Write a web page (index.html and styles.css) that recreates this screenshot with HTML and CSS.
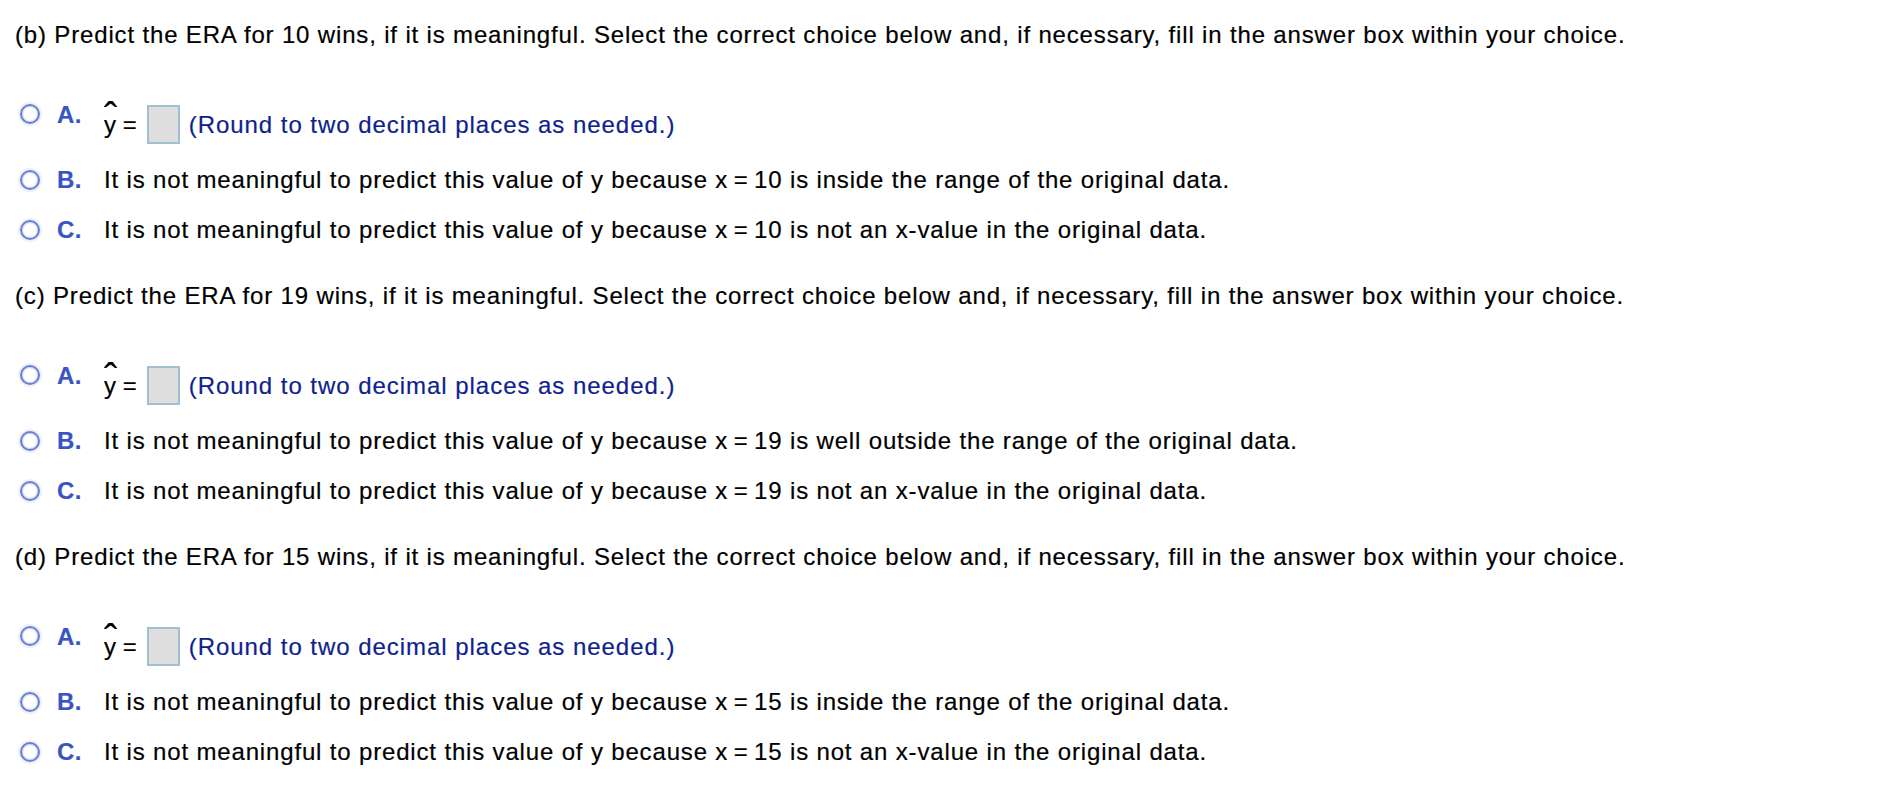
FILE: index.html
```html
<!DOCTYPE html>
<html lang="en">
<head>
<meta charset="utf-8">
<title>Predict the ERA</title>
<link rel="stylesheet" href="styles.css">
</head>
<body>
<div class="page">
  <section class="part">
    <p class="prompt">(b) Predict the ERA for 10 wins, if it is meaningful. Select the correct choice below and, if necessary, fill in the answer box within your choice.</p>
    <div class="choice choice-a">
      <span class="radio"></span>
      <span class="label">A.</span>
      <span class="math"><span class="yhat">y<span class="hat">ˆ</span></span><span class="eq">=</span><span class="answer-box"></span><span class="hint">(Round to two decimal places as needed.)</span></span>
    </div>
    <div class="choice">
      <span class="radio"></span>
      <span class="label">B.</span>
      <span class="text">It is not meaningful to predict this value of y because <span class="xeq">x = 10</span> is inside the range of the original data.</span>
    </div>
    <div class="choice">
      <span class="radio"></span>
      <span class="label">C.</span>
      <span class="text">It is not meaningful to predict this value of y because <span class="xeq">x = 10</span> is not an x-value in the original data.</span>
    </div>
  </section>
  <section class="part">
    <p class="prompt">(c) Predict the ERA for 19 wins, if it is meaningful. Select the correct choice below and, if necessary, fill in the answer box within your choice.</p>
    <div class="choice choice-a">
      <span class="radio"></span>
      <span class="label">A.</span>
      <span class="math"><span class="yhat">y<span class="hat">ˆ</span></span><span class="eq">=</span><span class="answer-box"></span><span class="hint">(Round to two decimal places as needed.)</span></span>
    </div>
    <div class="choice">
      <span class="radio"></span>
      <span class="label">B.</span>
      <span class="text">It is not meaningful to predict this value of y because <span class="xeq">x = 19</span> is well outside the range of the original data.</span>
    </div>
    <div class="choice">
      <span class="radio"></span>
      <span class="label">C.</span>
      <span class="text">It is not meaningful to predict this value of y because <span class="xeq">x = 19</span> is not an x-value in the original data.</span>
    </div>
  </section>
  <section class="part">
    <p class="prompt">(d) Predict the ERA for 15 wins, if it is meaningful. Select the correct choice below and, if necessary, fill in the answer box within your choice.</p>
    <div class="choice choice-a">
      <span class="radio"></span>
      <span class="label">A.</span>
      <span class="math"><span class="yhat">y<span class="hat">ˆ</span></span><span class="eq">=</span><span class="answer-box"></span><span class="hint">(Round to two decimal places as needed.)</span></span>
    </div>
    <div class="choice">
      <span class="radio"></span>
      <span class="label">B.</span>
      <span class="text">It is not meaningful to predict this value of y because <span class="xeq">x = 15</span> is inside the range of the original data.</span>
    </div>
    <div class="choice">
      <span class="radio"></span>
      <span class="label">C.</span>
      <span class="text">It is not meaningful to predict this value of y because <span class="xeq">x = 15</span> is not an x-value in the original data.</span>
    </div>
  </section>
</div>
</body>
</html>
```

FILE: styles.css
```css
html, body {
  margin: 0;
  padding: 0;
  background: #ffffff;
}

body {
  font-family: "Liberation Sans", Arial, Helvetica, sans-serif;
  font-size: 24px;
  letter-spacing: 0.84px;
  color: #000000;
  -webkit-text-stroke: 0.2px currentColor;
}

.page {
  padding: 22px 0 0 15px;
  display: flex;
  flex-direction: column;
  gap: 40px;
}

.prompt {
  margin: 0;
  line-height: 26px;
  white-space: nowrap;
}

.choice {
  display: flex;
  align-items: center;
  line-height: 26px;
  margin-top: 23px;
  white-space: nowrap;
}

.choice + .choice + .choice {
  margin-top: 24px;
}

.choice-a {
  align-items: flex-start;
  margin-top: 56px;
}

.radio {
  flex: none;
  box-sizing: border-box;
  width: 20px;
  height: 20px;
  margin-left: 5px;
  margin-right: 17px;
  border-radius: 50%;
  border: 2px solid #6a80d4;
  box-shadow: 0 0 0 2px #f0f1f6, inset 0 0 1px 1px rgba(120, 140, 220, 0.4);
  background: #ffffff;
}

.label {
  flex: none;
  width: 47px;
  font-weight: bold;
  letter-spacing: 0.3px;
  color: #3954c3;
}

.choice-a .label {
  line-height: 22px;
}

.math {
  display: flex;
  align-items: center;
  margin-top: 1px;
}

.yhat {
  position: relative;
}

.hat {
  position: absolute;
  left: 0;
  width: 100%;
  text-align: center;
  top: -10px;
  font-size: 40px;
  line-height: 30px;
  letter-spacing: 0;
  -webkit-text-stroke: 0;
}

.eq {
  margin-left: 6px;
}

.answer-box {
  box-sizing: border-box;
  width: 33px;
  height: 39px;
  margin-left: 9px;
  background: #dedede;
  border: 2px solid #9fc0d2;
}

.hint {
  margin-left: 9px;
  letter-spacing: 0.96px;
  color: #0f1f8e;
}

.xeq {
  word-spacing: -2px;
}
```
